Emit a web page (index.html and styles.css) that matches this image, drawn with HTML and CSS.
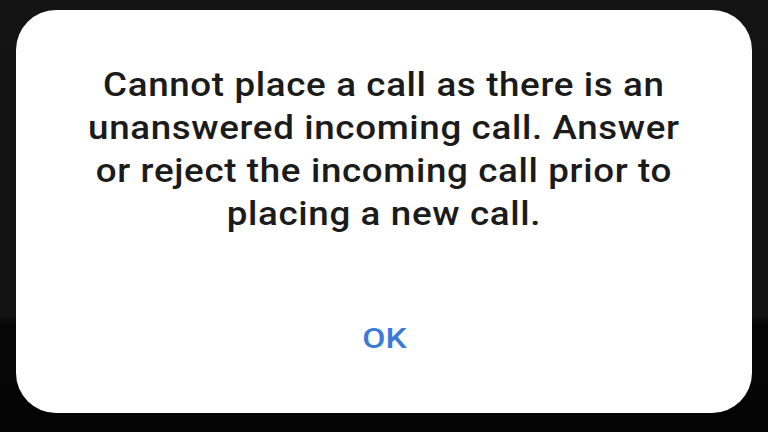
FILE: index.html
```
<!DOCTYPE html>
<html>
<head>
<meta charset="utf-8">
<link rel="stylesheet" href="styles.css">
</head>
<body>
<div class="screen">
  <div class="dialog">
    <p class="message">Cannot place a call as there is an<br>unanswered incoming call. Answer<br>or reject the incoming call prior to<br>placing a new call.</p>
    <div class="actions"><span class="ok">OK</span></div>
  </div>
</div>
</body>
</html>
```
FILE: styles.css
```
html, body {
  margin: 0;
  padding: 0;
}
body {
  width: 768px;
  height: 432px;
  overflow: hidden;
  background: linear-gradient(to bottom, #141414 0, #121212 315px, #060606 325px, #050505 100%);
  font-family: Roboto, "Noto Sans", sans-serif;
}
.screen {
  padding: 10px 16px 0 16px;
}
.dialog {
  width: 736px;
  height: 403px;
  background: #ffffff;
  border-radius: 40px;
  display: flex;
  flex-direction: column;
  align-items: center;
  box-sizing: border-box;
  padding-top: 53px;
}
.message {
  margin: 0;
  text-align: center;
  font-size: 34px;
  font-weight: 500;
  line-height: 43px;
  letter-spacing: 0.6px;
  color: #1b1b1b;
  transform: scaleX(1.08);
}
.actions {
  margin-top: 89px;
  line-height: 30px;
}
.ok {
  display: inline-block;
  font-size: 28px;
  font-weight: 500;
  color: #3a7ad9;
  transform: scaleX(1.2);
}
```
